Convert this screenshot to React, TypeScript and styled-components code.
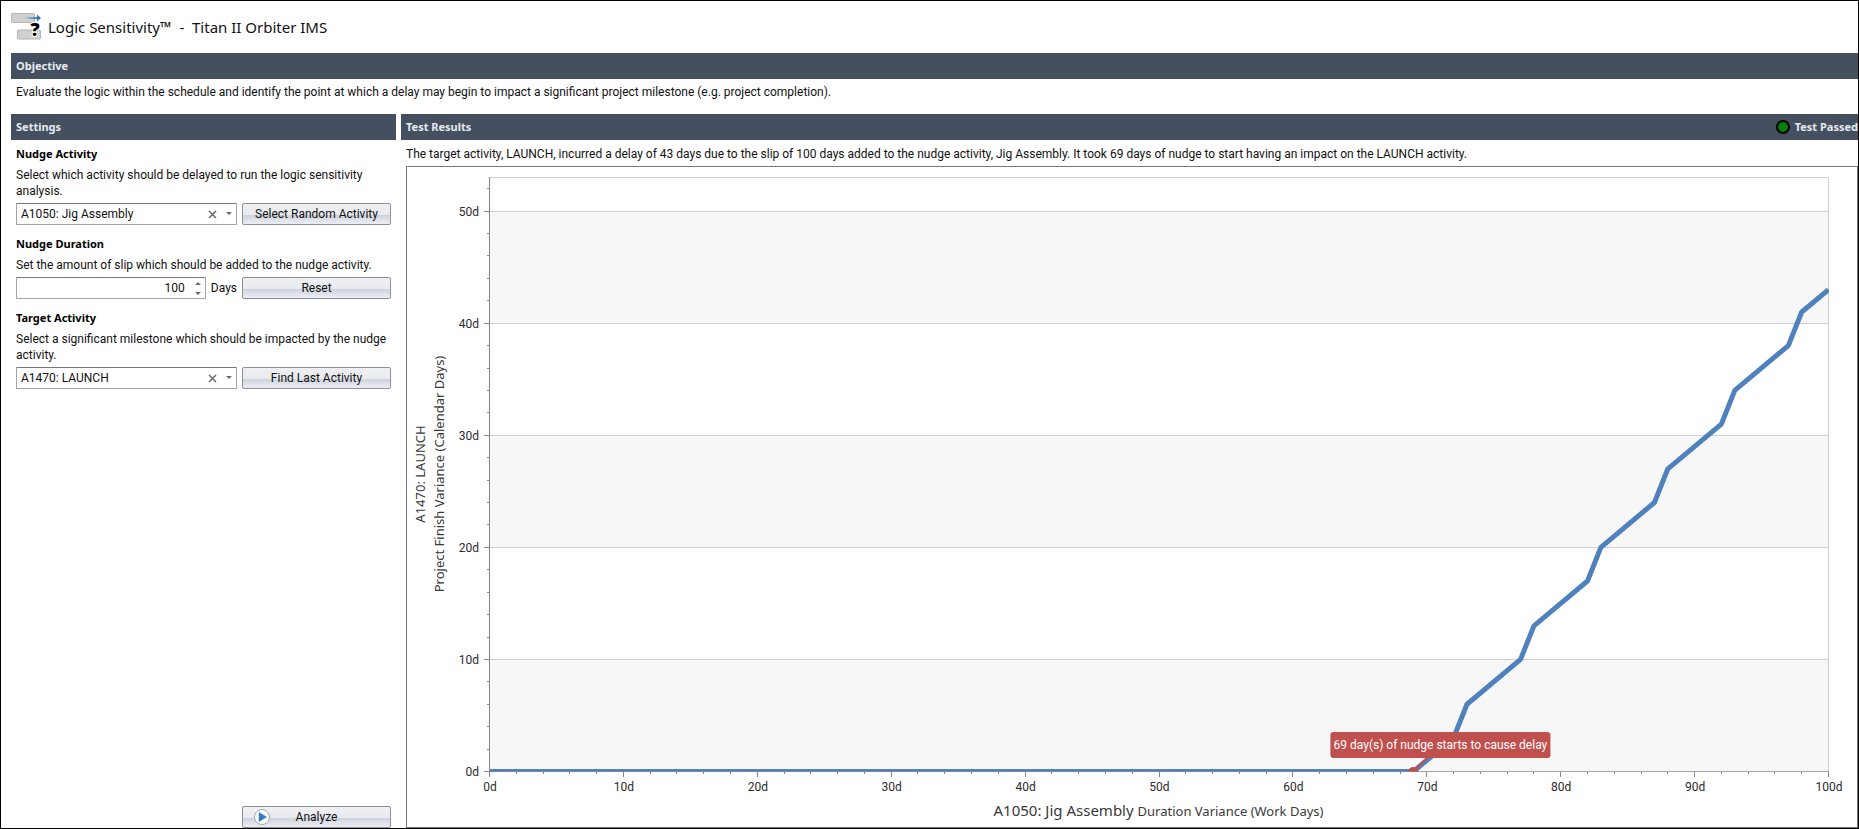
import React, { useLayoutEffect, useRef, useState } from 'react';
import styled, { createGlobalStyle } from 'styled-components';

const GlobalStyle = createGlobalStyle`
  *, *::before, *::after { box-sizing: border-box; }
  body {
    margin: 0;
    background: #fff;
    color: #111;
    font: 12px/16px Roboto, "Liberation Sans", sans-serif;
  }
`;

const headingFont = '"Noto Sans", "Open Sans", sans-serif';

const Page = styled.div`
  display: flex;
  flex-direction: column;
  min-height: 100vh;
  padding-left: 10px;
  border: 1px solid #000;
`;

const Header = styled.header`
  display: flex;
  align-items: center;
  gap: 7px;
  height: 52px;
`;

const Title = styled.h1`
  margin: 0;
  font: 400 15px/20px ${headingFont};
  white-space: pre;
`;

const Bar = styled.div`
  display: flex;
  align-items: center;
  justify-content: space-between;
  height: 26px;
  padding-left: 5px;
  background: #444f5f;
  color: #e6ebf1;
`;

const BarTitle = styled.h2`
  margin: 0;
  font: 700 11px/16px ${headingFont};
`;

const Status = styled.span`
  display: flex;
  align-items: center;
  gap: 5px;
  font: 700 11px/16px ${headingFont};
`;

const StatusDot = styled.i`
  width: 14px;
  height: 14px;
  border: 2px solid #000;
  border-radius: 50%;
  background: #078007;
`;

const Objective = styled.p`
  margin: 0;
  padding: 5px 5px 14px;
`;

const Columns = styled.main`
  display: grid;
  grid-template-columns: 385px minmax(0, 1fr);
  gap: 5px;
  flex: 1;
`;

const Panel = styled.section`
  display: flex;
  flex-direction: column;
`;

const SettingsForm = styled.form`
  display: flex;
  flex-direction: column;
  flex: 1;
  gap: 11px;
  padding: 6px 5px 0;
`;

const Setting = styled.div`
  display: flex;
  flex-direction: column;
`;

const SettingLabel = styled.label`
  font: 700 11px/16px ${headingFont};
  color: #000;
`;

const Hint = styled.p`
  margin: 5px 0 4px;
`;

const ControlRow = styled.div`
  display: grid;
  grid-template-columns: minmax(0, 1fr) 149px;
  gap: 5px;
`;

const ComboBox = styled.div`
  display: grid;
  grid-template-columns: minmax(0, 1fr) 17px 11px;
  align-items: center;
  height: 22px;
  border: 1px solid #a5a5a5;
  border-top-color: #777;
  border-radius: 1px;
  background: #fff;
  color: #6b6b6b;
`;

const ComboSelect = styled.select`
  grid-column: 1 / -1;
  grid-row: 1;
  height: 20px;
  padding: 0 32px 0 4px;
  appearance: none;
  border: 0;
  background: transparent;
  color: #111;
  font: inherit;
`;

const ClearButton = styled.button`
  grid-column: 2;
  grid-row: 1;
  display: flex;
  align-items: center;
  padding: 0;
  border: 0;
  background: none;
  color: inherit;
`;

const ComboArrow = styled.svg`
  grid-column: 3;
  grid-row: 1;
  pointer-events: none;
`;

const DurationField = styled.div`
  display: flex;
  align-items: center;
  gap: 5px;
`;

const SpinBox = styled.div`
  display: flex;
  flex: 1;
  min-width: 0;
  height: 22px;
  border: 1px solid #a5a5a5;
  border-top-color: #777;
  border-radius: 1px;
`;

const NumberInput = styled.input`
  flex: 1;
  min-width: 0;
  padding: 0 6px 0 4px;
  border: 0;
  background: none;
  color: #111;
  font: inherit;
  text-align: right;
  appearance: textfield;
  &::-webkit-inner-spin-button { appearance: none; margin: 0; }
`;

const SpinButtons = styled.div`
  display: flex;
  flex-direction: column;
  width: 14px;
`;

const SpinButton = styled.button`
  display: flex;
  align-items: center;
  justify-content: center;
  height: 10px;
  padding: 0;
  border: 0;
  background: none;
  color: #6b6b6b;
`;

const Button = styled.button`
  height: 22px;
  padding: 0;
  border: 1px solid #8c9099;
  border-radius: 2px;
  background: linear-gradient(#eef0f3 0%, #e8eaee 55%, #ced2dc 56%, #dfe2ea 80%, #eceef3 100%);
  color: #111;
  font: inherit;
`;

const AnalyzeButton = styled(Button)`
  display: grid;
  grid-template-columns: 1fr auto 1fr;
  align-items: center;
  align-self: flex-end;
  width: 149px;
  margin-top: auto;
`;

const PlayIcon = styled.svg`
  margin-left: 10px;
`;

const ResultText = styled.p`
  margin: 0;
  padding: 6px 5px 4px;
`;

const ChartFrame = styled.div`
  flex: 1;
  min-height: 360px;
  margin-left: 5px;
  border: 1px solid #777;
  overflow: hidden;
`;

const ChartSvg = styled.svg`
  display: block;
  width: 100%;
  height: 100%;
`;

const TickLabel = styled.text`
  fill: #2b2b2b;
  font-size: 12px;
`;

const AxisTitle = styled.text<{ $size: number }>`
  fill: #3a3a3a;
  font-family: ${headingFont};
  font-size: ${(p) => p.$size}px;
  text-anchor: middle;
`;

const CalloutText = styled.text`
  fill: #fff;
  font-size: 12px;
  text-anchor: middle;
`;

const CURVE: [number, number][] = [
  [0, 0], [69, 0], [72, 3], [73, 6], [77, 10], [78, 13], [82, 17], [83, 20],
  [87, 24], [88, 27], [92, 31], [93, 34], [97, 38], [98, 41], [100, 43],
];
const MAX_X = 100;
const MAX_Y = 53;
const BANDS = [0, 20, 40];

const range = (max: number, step: number) =>
  Array.from({ length: Math.floor(max / step) + 1 }, (_, i) => i * step);

function SensitivityChart() {
  const frame = useRef<HTMLDivElement>(null);
  const [size, setSize] = useState({ w: 1200, h: 600 });

  useLayoutEffect(() => {
    const el = frame.current!;
    const measure = () => setSize({ w: el.clientWidth, h: el.clientHeight });
    measure();
    const observer = new ResizeObserver(measure);
    observer.observe(el);
    return () => observer.disconnect();
  }, []);

  const left = 82;
  const right = size.w - 29;
  const top = 10;
  const bottom = size.h - 56;
  const px = (v: number) => left + (v / MAX_X) * (right - left);
  const py = (v: number) => bottom - (v / MAX_Y) * (bottom - top);
  const snap = (v: number) => Math.round(v) + 0.5;
  const midY = (top + bottom) / 2;
  const hitX = px(69) + 0.5;

  return (
    <ChartFrame ref={frame}>
      <ChartSvg role="img" aria-label="Project finish variance by nudge duration">
        <defs>
          <clipPath id="plot">
            <rect x={left} y={top} width={right - left + 1} height={bottom - top + 1} />
          </clipPath>
        </defs>
        {BANDS.map((v) => (
          <rect key={v} x={left} y={py(v + 10)} width={right - left} height={py(v) - py(v + 10)} fill="#f7f7f7" />
        ))}
        {[10, 20, 30, 40, 50].map((v) => (
          <path key={v} d={`M${left} ${snap(py(v))}H${right + 1}`} stroke="#cfd1d1" />
        ))}
        <path d={`M${left} ${top + 0.5}H${right + 0.5}V${bottom}`} fill="none" stroke="#cfd1d1" />

        <g clipPath="url(#plot)">
          <polyline
            points={CURVE.map(([x, y]) => `${px(x) + 0.5},${py(y) + 0.5}`).join(' ')}
            fill="none"
            stroke="#4f81bd"
            strokeWidth={5}
            strokeLinejoin="round"
          />
          <path d={`M${hitX} ${bottom}L${hitX + 27} ${bottom - 26}`} stroke="#c0504d" strokeWidth={2} />
          <ellipse cx={hitX} cy={bottom} rx={5} ry={4} fill="#c0504d" />
        </g>

        <g stroke="#858585">
          <path d={`M${left + 0.5} ${top}V${bottom + 1}`} />
          <path d={`M${left} ${bottom + 0.5}H${right + 1}`} strokeOpacity={0.75} />
          {range(MAX_Y, 2).map((v) => (
            <path key={v} d={`M${left - (v % 10 ? 2 : 5)} ${snap(py(v))}H${left}`} />
          ))}
          {range(MAX_X, 2).map((v) => (
            <path key={v} d={`M${snap(px(v))} ${bottom + 1}V${bottom + (v % 10 ? 3 : 6)}`} />
          ))}
        </g>

        {range(MAX_Y, 10).map((v) => (
          <TickLabel key={v} x={left - 10} y={Math.round(py(v)) + 5} textAnchor="end">{v}d</TickLabel>
        ))}
        {range(MAX_X, 10).map((v) => (
          <TickLabel key={v} x={px(v) + 1} y={bottom + 20} textAnchor="middle">{v}d</TickLabel>
        ))}

        <AxisTitle $size={13} transform={`translate(18 ${midY}) rotate(-90)`}>A1470: LAUNCH</AxisTitle>
        <AxisTitle $size={13} transform={`translate(37 ${midY}) rotate(-90)`}>
          Project Finish Variance (Calendar Days)
        </AxisTitle>
        <AxisTitle $size={15} x={(left + right) / 2} y={bottom + 45}>
          A1050: Jig Assembly <tspan fontSize={13}>Duration Variance (Work Days)</tspan>
        </AxisTitle>

        <rect x={hitX - 83} y={bottom - 39} width={220} height={26} rx={3} fill="#c0504d" />
        <CalloutText x={hitX + 27} y={bottom - 22}>69 day(s) of nudge starts to cause delay</CalloutText>
      </ChartSvg>
    </ChartFrame>
  );
}

function LogicIcon() {
  return (
    <svg width="30" height="28" viewBox="0 0 30 28" aria-hidden="true">
      <defs>
        <linearGradient id="arrow" x1="13" x2="26" y1="0" y2="0" gradientUnits="userSpaceOnUse">
          <stop offset="0" stopColor="#3f7fb8" stopOpacity="0" />
          <stop offset="1" stopColor="#2f78b7" />
        </linearGradient>
      </defs>
      <rect x="0.5" y="0.5" width="23" height="9" rx="1" fill="#d0d0d0" stroke="#b3b3b3" />
      <rect x="6.5" y="17" width="23" height="9" rx="1" fill="#d0d0d0" stroke="#b3b3b3" />
      <rect x="13" y="4" width="14" height="2" fill="url(#arrow)" />
      <path d="M26 1.500 30 5l-4 3.500z" fill="#2f78b7" />
      <text
        x="24" y="23" textAnchor="middle" fontFamily="Noto Sans" fontWeight="900" fontSize="18"
        fill="#000" stroke="#fff" strokeWidth="2" paintOrder="stroke"
      >?</text>
    </svg>
  );
}

interface ComboProps {
  id: string;
  options: string[];
}

function ActivityCombo({ id, options }: ComboProps) {
  const [value, setValue] = useState(options[0]);
  return (
    <ComboBox>
      <ComboSelect id={id} value={value} onChange={(e) => setValue(e.target.value)}>
        <option value="" />
        {options.map((o) => <option key={o}>{o}</option>)}
      </ComboSelect>
      <ClearButton type="button" aria-label="Clear" onClick={() => setValue('')}>
        <svg width="9" height="9" viewBox="0 0 9 9">
          <path d="M1 1l7 7M8 1l-7 7" stroke="currentColor" strokeWidth="1.500" />
        </svg>
      </ClearButton>
      <ComboArrow width="9" height="4" viewBox="0 0 9 4" aria-hidden="true">
        <path d="M1 0h6L4 3z" fill="currentColor" />
      </ComboArrow>
    </ComboBox>
  );
}

export default function App() {
  const [days, setDays] = useState(100);
  return (
    <>
      <GlobalStyle />
      <Page>
        <Header>
          <LogicIcon />
          <Title>{'Logic Sensitivity™  -  Titan II Orbiter IMS'}</Title>
        </Header>
        <Bar><BarTitle>Objective</BarTitle></Bar>
        <Objective>
          Evaluate the logic within the schedule and identify the point at which a delay may begin to impact a
          significant project milestone (e.g. project completion).
        </Objective>
        <Columns>
          <Panel>
            <Bar><BarTitle>Settings</BarTitle></Bar>
            <SettingsForm onSubmit={(e) => e.preventDefault()}>
              <Setting>
                <SettingLabel htmlFor="nudge">Nudge Activity</SettingLabel>
                <Hint>Select which activity should be delayed to run the logic sensitivity analysis.</Hint>
                <ControlRow>
                  <ActivityCombo id="nudge" options={['A1050: Jig Assembly', 'A1470: LAUNCH']} />
                  <Button type="button">Select Random Activity</Button>
                </ControlRow>
              </Setting>
              <Setting>
                <SettingLabel htmlFor="duration">Nudge Duration</SettingLabel>
                <Hint>Set the amount of slip which should be added to the nudge activity.</Hint>
                <ControlRow>
                  <DurationField>
                    <SpinBox>
                      <NumberInput
                        id="duration"
                        type="number"
                        value={days}
                        onChange={(e) => setDays(Number(e.target.value))}
                      />
                      <SpinButtons>
                        <SpinButton type="button" aria-label="Increase" onClick={() => setDays(days + 1)}>
                          <svg width="6" height="3" viewBox="0 0 6 3"><path d="M0 3h6L3 0z" fill="currentColor" /></svg>
                        </SpinButton>
                        <SpinButton type="button" aria-label="Decrease" onClick={() => setDays(days - 1)}>
                          <svg width="6" height="3" viewBox="0 0 6 3"><path d="M0 0h6L3 3z" fill="currentColor" /></svg>
                        </SpinButton>
                      </SpinButtons>
                    </SpinBox>
                    <span>Days</span>
                  </DurationField>
                  <Button type="button" onClick={() => setDays(100)}>Reset</Button>
                </ControlRow>
              </Setting>
              <Setting>
                <SettingLabel htmlFor="target">Target Activity</SettingLabel>
                <Hint>Select a significant milestone which should be impacted by the nudge activity.</Hint>
                <ControlRow>
                  <ActivityCombo id="target" options={['A1470: LAUNCH', 'A1050: Jig Assembly']} />
                  <Button type="button">Find Last Activity</Button>
                </ControlRow>
              </Setting>
              <AnalyzeButton type="submit">
                <PlayIcon width="18" height="18" viewBox="0 0 18 18" aria-hidden="true">
                  <circle cx="9" cy="9" r="7.500" fill="#fff" stroke="#a3a7ad" />
                  <path d="M6 4.500v9L13.500 9z" fill="#2f7fc4" stroke="#2a6ca8" strokeWidth="0.5" />
                </PlayIcon>
                Analyze
              </AnalyzeButton>
            </SettingsForm>
          </Panel>
          <Panel>
            <Bar>
              <BarTitle>Test Results</BarTitle>
              <Status><StatusDot />Test Passed</Status>
            </Bar>
            <ResultText>
              The target activity, LAUNCH, incurred a delay of 43 days due to the slip of 100 days added to the nudge
              activity, Jig Assembly. It took 69 days of nudge to start having an impact on the LAUNCH activity.
            </ResultText>
            <SensitivityChart />
          </Panel>
        </Columns>
      </Page>
    </>
  );
}
